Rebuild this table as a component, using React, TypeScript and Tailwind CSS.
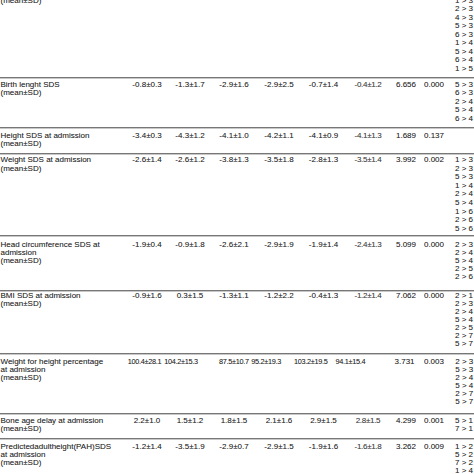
import React from "react";

type Row = {
  label: string[];
  values: string[];
  post: string[];
  box: string; // height + padding + leading
  wide?: boolean;
};

const rows: Row[] = [
  {
    label: ["(mean±SD)"],
    values: ["", "", "", "", "", "", "", ""],
    post: ["1 > 3", "2 > 3", "4 > 3", "5 > 3", "6 > 3", "1 > 4", "5 > 4", "6 > 4", "1 > 5"],
    box: "h-[80.5px] pt-0 leading-[8.5px]",
  },
  {
    label: ["Birth lenght SDS", "(mean±SD)"],
    values: ["-0.8±0.3", "-1.3±1.7", "-2.9±1.6", "-2.9±2.5", "-0.7±1.4", "-0.4±1.2", "6.656", "0.000"],
    post: ["5 > 3", "6 > 3", "2 > 4", "5 > 4", "6 > 4"],
    box: "h-[48px] pt-[2px] leading-[8.4px]",
  },
  {
    label: ["Height SDS at admission", "(mean±SD)"],
    values: ["-3.4±0.3", "-4.3±1.2", "-4.1±1.0", "-4.2±1.1", "-4.1±0.9", "-4.1±1.3", "1.689", "0.137"],
    post: [],
    box: "h-[23.5px] pt-[2.5px] leading-[8.3px]",
  },
  {
    label: ["Weight SDS at admission", "(mean±SD)"],
    values: ["-2.6±1.4", "-2.6±1.2", "-3.8±1.3", "-3.5±1.8", "-2.8±1.3", "-3.5±1.4", "3.992", "0.002"],
    post: ["1 > 3", "2 > 3", "5 > 3", "1 > 4", "2 > 4", "5 > 4", "1 > 6", "2 > 6", "5 > 6"],
    box: "h-[80.5px] pt-[1.5px] leading-[8.6px]",
  },
  {
    label: ["Head circumference SDS at", "admission", "(mean±SD)"],
    values: ["-1.9±0.4", "-0.9±1.8", "-2.6±2.1", "-2.9±1.9", "-1.9±1.4", "-2.4±1.3", "5.099", "0.000"],
    post: ["2 > 3", "2 > 4", "5 > 4", "2 > 5", "2 > 6"],
    box: "h-[52.7px] pt-[4px] leading-[8px]",
  },
  {
    label: ["BMI SDS at admission", "(mean±SD)"],
    values: ["-0.9±1.6", "0.3±1.5", "-1.3±1.1", "-1.2±2.2", "-0.4±1.3", "-1.2±1.4", "7.062", "0.000"],
    post: ["2 > 1", "2 > 3", "2 > 4", "5 > 4", "2 > 5", "2 > 7", "5 > 7"],
    box: "h-[61.6px] pt-0 leading-[8px]",
  },
  {
    label: ["Weight for height percentage", "at admission", "(mean±SD)"],
    values: ["100.4±28.1", "104.2±15.3", "87.5±10.7", "95.2±19.3", "103.2±19.5", "94.1±15.4", "3.731", "0.003"],
    post: ["2 > 3", "5 > 3", "2 > 4", "5 > 4", "2 > 7", "5 > 7"],
    box: "h-[57.7px] pt-[3px] leading-[8px]",
    wide: true,
  },
  {
    label: ["Bone age delay at admission", "(mean±SD)"],
    values: ["2.2±1.0", "1.5±1.2", "1.8±1.5", "2.1±1.6", "2.9±1.5", "2.8±1.5", "4.299", "0.001"],
    post: ["5 > 1", "7 > 1"],
    box: "h-[23.3px] pt-[2.3px] leading-[8px]",
  },
  {
    label: ["Predictedadultheight(PAH)SDS", "at admission", "(mean±SD)"],
    values: ["-1.2±1.4", "-3.5±1.9", "-2.9±0.7", "-2.9±1.5", "-1.9±1.6", "-1.6±1.8", "3.262", "0.009"],
    post: ["1 > 2", "5 > 2", "7 > 2", "1 > 4"],
    box: "h-[33.7px] pt-[2.5px] leading-[8px]",
  },
];

function Rule() {
  return (
    <div className="w-full">
      <div className="h-px bg-[#777777]" />
      <div className="h-px bg-[#c8c8c8]" />
    </div>
  );
}

function TableRow({ r }: { r: Row }) {
  const grid = r.wide
    ? "grid-cols-[127.7px_36.6px_54.7px_32.3px_42.7px_41.6px_59px_29.4px_31.3px_1fr] text-left"
    : "grid-cols-[125px_44px_42px_46px_44px_45px_44px_32px_24px_1fr] text-center";
  const valueClass = (i: number) => {
    if (r.wide && i < 6) return "whitespace-nowrap text-[7.3px] tracking-[-0.3px]";
    if (i === 5) return "whitespace-nowrap tracking-[-0.3px] text-[#4a4a4a]";
    return "whitespace-nowrap";
  };
  return (
    <div className={`grid ${grid} ${r.box} overflow-hidden`}>
      <div className="text-left pl-[0.5px] whitespace-nowrap">
        {r.label.map((l, i) => (
          <div key={i}>{l}</div>
        ))}
      </div>
      {r.values.map((v, i) => (
        <div key={i} className={valueClass(i)}>
          {v}
        </div>
      ))}
      <div className={r.wide ? "text-left whitespace-nowrap" : "text-left pl-[9px] whitespace-nowrap"}>
        {r.post.map((p, i) => (
          <div key={i}>{p}</div>
        ))}
      </div>
    </div>
  );
}

export default function App() {
  return (
    <div className="w-[474px] h-[474px] overflow-hidden bg-white text-[#303030] text-[8px] font-['Liberation_Sans',Arial,sans-serif] [text-shadow:0_0_0.3px_rgba(0,0,0,0.35)]">
      <div className="-mt-[3.5px]">
        {rows.map((r, i) => (
          <React.Fragment key={i}>
            <TableRow r={r} />
            {i < rows.length - 1 && <Rule />}
          </React.Fragment>
        ))}
      </div>
    </div>
  );
}
